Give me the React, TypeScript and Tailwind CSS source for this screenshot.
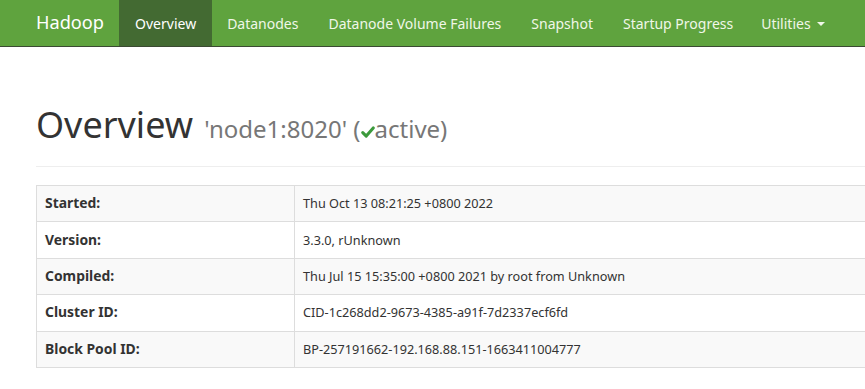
import React from 'react';

const navItems = ['Datanodes', 'Datanode Volume Failures', 'Snapshot', 'Startup Progress'];

const rows: [string, string][] = [
  ['Started:', 'Thu Oct 13 08:21:25 +0800 2022'],
  ['Version:', '3.3.0, rUnknown'],
  ['Compiled:', 'Thu Jul 15 15:35:00 +0800 2021 by root from Unknown'],
  ['Cluster ID:', 'CID-1c268dd2-9673-4385-a91f-7d2337ecf6fd'],
  ['Block Pool ID:', 'BP-257191662-192.168.88.151-1663411004777'],
];

const App: React.FC = () => {
  return (
    <div
      className="w-[865px] h-[389px] overflow-hidden bg-white text-[#333]"
      style={{ fontFamily: '"Noto Sans", "Open Sans", sans-serif' }}
    >
      <nav className="h-[47px] bg-[#5fa33e] border-b border-[#3b4a33] flex items-stretch pl-[21px] text-white whitespace-nowrap">
        <a className="shrink-0 flex items-center px-[15px] text-[18.2px]">Hadoop</a>
        <a className="shrink-0 flex items-center px-[16px] text-[14px] bg-[#436a32]">Overview</a>
        {navItems.map((item) => (
          <a key={item} className="shrink-0 flex items-center px-[15px] text-[14px] text-[#f0f7e8]">
            {item}
          </a>
        ))}
        <a className="shrink-0 flex items-center pl-[13px] pr-[15px] text-[14px] text-[#f0f7e8]">
          Utilities
          <span className="ml-[6px] mt-[2px] w-0 h-0 border-l-[4px] border-r-[4px] border-t-[4px] border-l-transparent border-r-transparent border-t-[#f0f7e8]" />
        </a>
      </nav>

      <div className="pl-[36px]">
        <div className="pt-[58px] pb-[17px] border-b border-[#eee] mr-[-20px]">
          <h1 className="text-[36px] leading-[40px] font-normal text-[#333] whitespace-nowrap">
            Overview
            <small className="ml-[5px] text-[24px] text-[#777]">
              {' '}'node1:8020' (
              <svg viewBox="0 0 12 12" className="inline-block w-[14px] h-[14px] align-[-1px]">
                <path d="M1.5 6.5 L4.5 9.5 L10.5 2.5" fill="none" stroke="#3c9a3c" strokeWidth="2.6" strokeLinecap="round" strokeLinejoin="round" />
              </svg>
              active)
            </small>
          </h1>
        </div>

        <table className="mt-[18px] w-[900px] border-collapse border border-[#ddd]">
          <tbody>
            {rows.map(([k, v], i) => (
              <tr key={k} className={i % 2 === 0 ? 'bg-[#f9f9f9]' : 'bg-white'}>
                <th className="w-[258px] text-left text-[13.9px] font-bold px-[8px] h-[36.4px] border border-[#ddd] text-[#333]">
                  {k}
                </th>
                <td className="px-[8px] h-[36.4px] text-[12.7px] border border-[#ddd] text-[#333]">{v}</td>
              </tr>
            ))}
          </tbody>
        </table>
      </div>
    </div>
  );
};

export default App;
